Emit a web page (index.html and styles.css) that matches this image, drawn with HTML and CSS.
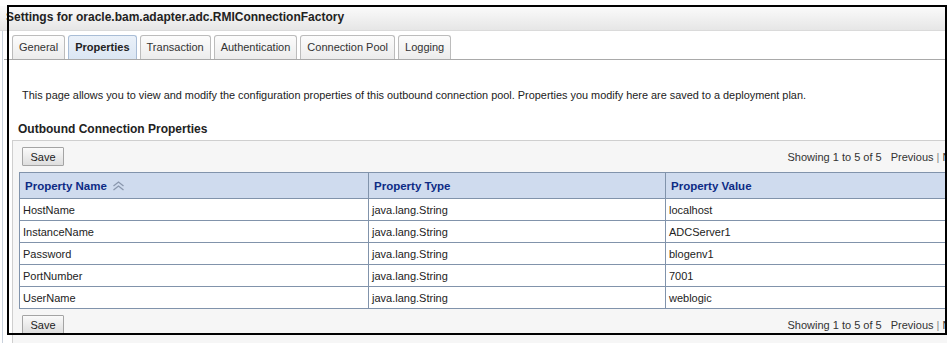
FILE: index.html
```html
<!DOCTYPE html>
<html lang="en">
<head>
    <meta charset="UTF-8"/>
    <title>Settings for oracle.bam.adapter.adc.RMIConnectionFactory</title>
    <link rel="stylesheet" href="styles.css">
</head>
<body>
<div class="page">
    <div class="title-bar">Settings for oracle.bam.adapter.adc.RMIConnectionFactory</div>
    <div class="body-row">
        <div class="rail"></div>
        <div class="content">
            <div class="tabs">
                <span class="tab">General</span>
                <span class="tab active">Properties</span>
                <span class="tab">Transaction</span>
                <span class="tab">Authentication</span>
                <span class="tab">Connection Pool</span>
                <span class="tab">Logging</span>
            </div>
            <div class="white-area">
                <p class="intro">This page allows you to view and modify the configuration properties of this outbound connection pool. Properties you modify here are saved to a deployment plan.</p>
                <h3 class="section-title">Outbound Connection Properties</h3>
            </div>
            <div class="table-box">
                <div class="toolbar">
                    <button class="btn">Save</button>
                    <div class="pager">Showing 1 to 5 of 5 <span class="prev">Previous</span><span class="sep">|</span>Next</div>
                </div>
                <table class="props">
                    <thead>
                        <tr>
                            <th class="col-name">Property Name
                                <svg class="sort-icon" width="13" height="10" viewBox="0 0 13 10">
                                    <path d="M1.5 5 L6.5 1 L11.5 5" fill="none" stroke="#8a97ad" stroke-width="1.3"/>
                                    <path d="M1.5 9 L6.5 5 L11.5 9" fill="none" stroke="#8a97ad" stroke-width="1.3"/>
                                </svg>
                            </th>
                            <th class="col-type">Property Type</th>
                            <th>Property Value</th>
                        </tr>
                    </thead>
                    <tbody>
                        <tr><td>HostName</td><td>java.lang.String</td><td>localhost</td></tr>
                        <tr><td>InstanceName</td><td>java.lang.String</td><td>ADCServer1</td></tr>
                        <tr><td>Password</td><td>java.lang.String</td><td>blogenv1</td></tr>
                        <tr><td>PortNumber</td><td>java.lang.String</td><td>7001</td></tr>
                        <tr><td>UserName</td><td>java.lang.String</td><td>weblogic</td></tr>
                    </tbody>
                </table>
                <div class="toolbar bottom">
                    <button class="btn">Save</button>
                    <div class="pager">Showing 1 to 5 of 5 <span class="prev">Previous</span><span class="sep">|</span>Next</div>
                </div>
            </div>
        </div>
    </div>
</div>
<div class="frame"></div>
</body>
</html>
```

FILE: styles.css
```css
body {
    margin: 0;
    background-color: #f0f0f0;
    font-family: "Liberation Sans", Arial, sans-serif;
    font-size: 11px;
    color: #222;
    overflow: hidden;
    width: 947px;
    height: 343px;
    position: relative;
}
.page {
    width: 1000px;
    padding-top: 6px;
    background-color: #fff;
}
.title-bar {
    height: 24px;
    line-height: 23px;
    padding-left: 6px;
    font-size: 12px;
    font-weight: bold;
    color: #222;
    background: linear-gradient(#fbfbfb, #e6e6e6);
    border-bottom: 1px solid #dadada;
}
.body-row {
    display: flex;
}
.rail {
    width: 2px;
    border-right: 1px solid #c9d1dc;
    margin-right: 1px;
    background-color: #fff;
}
.content {
    flex: 1;
}
.tabs {
    display: flex;
    gap: 3px;
    padding: 4px 0 0 8px;
    border-bottom: 1px solid #a9a9a9;
    background-color: #fff;
}
.tab {
    height: 23px;
    line-height: 23px;
    padding: 0 6px;
    border: 1px solid #bcbcbc;
    border-bottom: none;
    border-radius: 3px 3px 0 0;
    background: linear-gradient(#fcfcfc, #ececec);
    color: #333;
}
.tab.active {
    font-weight: bold;
    background: linear-gradient(#eaf1f9, #dbe6f3);
    border-color: #a9bdd6;
    color: #222;
}
.white-area {
    background-color: #fff;
    padding: 28px 0 4px 0;
}
.intro {
    margin: 0 0 0 18px;
    line-height: 14px;
    font-size: 10.9px;
}
.section-title {
    margin: 20px 0 0 14px;
    font-size: 12px;
    font-weight: bold;
    color: #222;
    line-height: 14px;
}
.table-box {
    margin-left: 8px;
    background-color: #f6f6f6;
    border-top: 1px solid #cfcfcf;
    border-left: 1px solid #cfcfcf;
    padding: 6px 0 10px 6px;
    height: 200px;
}
.toolbar {
    display: flex;
    justify-content: space-between;
    align-items: center;
    height: 19px;
    margin-left: 3px;
    padding-right: 35px;
}
.toolbar.bottom {
    margin-top: 6px;
}
.btn {
    font-family: "Liberation Sans", Arial, sans-serif;
    font-size: 11px;
    color: #222;
    height: 19px;
    width: 42px;
    padding: 0;
    border: 1px solid #a4a4a4;
    border-radius: 1px;
    background: linear-gradient(#fafafa, #dedede);
}
.pager {
    color: #333;
}
.prev {
    margin-left: 6px;
}
.sep {
    margin: 0 3px;
    color: #888;
}
.props {
    border-collapse: collapse;
    margin-top: 6px;
    width: 975px;
    background-color: #fff;
}
.props th {
    height: 25px;
    text-align: left;
    padding: 0 5px;
    background-color: #cfdbee;
    color: #0d2b85;
    font-size: 11.5px;
    font-weight: bold;
    border: 1px solid #8193ab;
}
.props td {
    height: 21px;
    padding: 0 3px;
    border: 1px solid #8193ab;
    color: #222;
}
.col-name {
    width: 338px;
}
.col-type {
    width: 286px;
}
.sort-icon {
    vertical-align: -1px;
    margin-left: 2px;
}
.frame {
    position: absolute;
    left: 7px;
    top: 5px;
    width: 936px;
    height: 326px;
    border: 2px solid #000;
    pointer-events: none;
}
```
